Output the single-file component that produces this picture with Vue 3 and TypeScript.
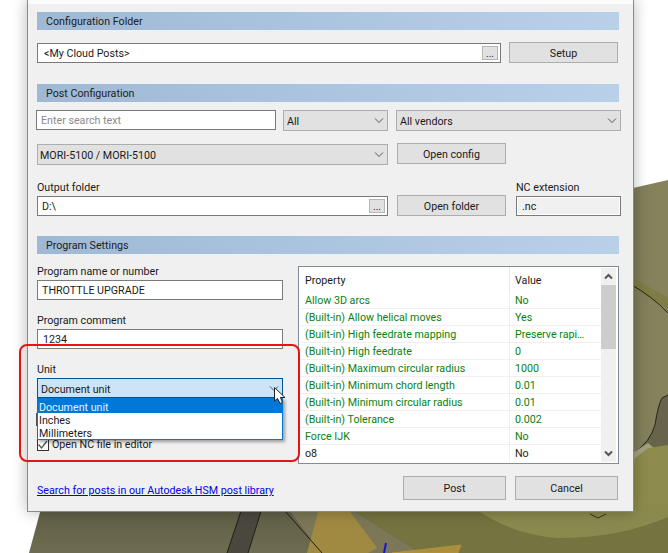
<script setup lang="ts">
interface Row { name: string; value: string; dark?: boolean }
const rows: Row[] = [
  { name: 'Allow 3D arcs', value: 'No' },
  { name: '(Built-in) Allow helical moves', value: 'Yes' },
  { name: '(Built-in) High feedrate mapping', value: 'Preserve rapi…' },
  { name: '(Built-in) High feedrate', value: '0' },
  { name: '(Built-in) Maximum circular radius', value: '1000' },
  { name: '(Built-in) Minimum chord length', value: '0.01' },
  { name: '(Built-in) Minimum circular radius', value: '0.01' },
  { name: '(Built-in) Tolerance', value: '0.002' },
  { name: 'Force IJK', value: 'No' },
  { name: 'o8', value: 'No', dark: true },
]
</script>

<template>
  <div class="desk">
    <svg class="cad" width="668" height="553" viewBox="0 0 668 553">
      <defs>
        <linearGradient id="wall" x1="0" y1="0" x2="1" y2="0">
          <stop offset="0" stop-color="#7f7c5a" />
          <stop offset="1" stop-color="#86835c" />
        </linearGradient>
        <linearGradient id="ground" x1="0" y1="0" x2="0" y2="1">
          <stop offset="0" stop-color="#5f5e46" />
          <stop offset="1" stop-color="#6d6c50" />
        </linearGradient>
      </defs>
      <polygon points="620,191 668,180 668,520 620,520" fill="url(#wall)" />
      <polygon points="620,270 668,298 668,309 620,281" fill="#7f7c45" />
      <path d="M630 284 Q652 296 668 313" fill="none" stroke="#26251a" />
      <path d="M620 462 L634 453 Q650 442 655 425 Q658 405 662 398 L668 395 L668 450 L620 480Z" fill="#66644a" />
      <path d="M634 453 Q650 442 655 425 Q658 405 662 398 L668 395" fill="none" stroke="#26251a" />
      <polygon points="634,452 648,443 655,449 634,470" fill="#a3a384" />
      <polygon points="620,520 620,470 648,448 668,445 668,553 620,553" fill="#8e8c4c" />
      <polygon points="42,505 29,553 668,553 668,505" fill="url(#ground)" />
      <polygon points="285,505 345,505 420,553 322,553" fill="#7c7857" />
      <polygon points="345,505 668,505 668,553 420,553" fill="#75733f" />
      <path d="M470 505 Q510 535 558 538 Q620 538 668 517 L668 505Z" fill="#8b8a4e" />
      <path d="M590 514 L598 518 L606 514" fill="none" stroke="#35341f" />
      <polygon points="243,505 263,505 248,553 227,553" fill="#4a483e" />
      <path d="M243 505 L227 553 M263 505 L248 553" stroke="#1f1e18" fill="none" />
      <polygon points="320,505 345,505 377,548 368,553 307,553" fill="#a08a42" />
      <polygon points="392,553 461,545 458,553" fill="#a88e3e" stroke="#c49b37" stroke-width=".6" />
      <path d="M285 511 L322 553" stroke="#1f1e18" fill="none" />
      <path d="M386 543 L384 553" stroke="#1414e0" stroke-width="2" fill="none" />
    </svg>
    <div class="dialog">
      <div class="head first">Configuration Folder</div>
      <div class="row folder-row">
        <div class="input folder">&lt;My Cloud Posts&gt;<span class="dots">...</span></div>
        <button class="btn setup">Setup</button>
      </div>
      <div class="head second">Post Configuration</div>
      <div class="row filter-row">
        <div class="input search">Enter search text</div>
        <div class="combo all"><span>All</span><svg class="chev" width="10" height="6" viewBox="0 0 10 6"><path d="M1 .5 5 4.500 9 .5" fill="none" stroke="#555" /></svg></div>
        <div class="combo vendors"><span>All vendors</span><svg class="chev" width="10" height="6" viewBox="0 0 10 6"><path d="M1 .5 5 4.500 9 .5" fill="none" stroke="#555" /></svg></div>
      </div>
      <div class="row machine-row">
        <div class="combo machine"><span>MORI-5100 / MORI-5100</span><svg class="chev" width="10" height="6" viewBox="0 0 10 6"><path d="M1 .5 5 4.500 9 .5" fill="none" stroke="#555" /></svg></div>
        <button class="btn open">Open config</button>
      </div>
      <div class="row output-row">
        <div class="field out">
          <label>Output folder</label>
          <div class="input outval">D:\<span class="dots">...</span></div>
        </div>
        <button class="btn open">Open folder</button>
        <div class="field ext">
          <label>NC extension</label>
          <div class="input readonly">.nc</div>
        </div>
      </div>
      <div class="head third">Program Settings</div>
      <div class="settings">
        <div class="left">
          <label>Program name or number</label>
          <div class="input">THROTTLE UPGRADE</div>
          <label class="l2">Program comment</label>
          <div class="input comment">1234</div>
          <label class="l3">Unit</label>
          <div class="unit">
            <span>Document unit</span>
            <svg class="chev" width="10" height="6" viewBox="0 0 10 6"><path d="M1 .5 5 4.500 9 .5" fill="none" stroke="#555" /></svg>
          </div>
          <div class="hidden-edge"></div>
          <div class="check-line">
            <span class="box"><svg width="12" height="12" viewBox="0 0 12 12"><path d="M1.500 5.500 4.500 9 10 2" fill="none" stroke="#555" stroke-width="1.3" /></svg></span>
            <span class="check-text">Open NC file in editor</span>
          </div>
          <div class="menu">
            <div class="opt on">Document unit</div>
            <div class="opt">Inches</div>
            <div class="opt">Millimeters</div>
          </div>
          <svg class="cursor" width="14" height="19" viewBox="0 0 14 19"><path d="M1.500 1.500V15L4.500 12.500 7 17.500 9.500 16.500 7.500 11.500H12Z" fill="#fff" stroke="#222" /></svg>
        </div>
        <div class="table">
          <div class="grid-wrap">
            <div class="thead"><span class="c1">Property</span><span class="c2">Value</span></div>
            <div v-for="r in rows" :key="r.name" class="tr" :class="{ dark: r.dark }">
              <span class="c1">{{ r.name }}</span><span class="c2">{{ r.value }}</span>
            </div>
          </div>
          <div class="scroll">
            <svg width="15" height="17" viewBox="0 0 15 17"><path d="M4 10.500 7.500 7 11 10.500" fill="none" stroke="#555" stroke-width="2" /></svg>
            <div class="thumb"></div>
            <svg class="down" width="15" height="17" viewBox="0 0 15 17"><path d="M4 6.500 7.500 10 11 6.500" fill="none" stroke="#555" stroke-width="2" /></svg>
          </div>
        </div>
      </div>
      <div class="foot">
        <a class="link">Search for posts in our Autodesk HSM post library</a>
        <button class="btn big">Post</button>
        <button class="btn big">Cancel</button>
      </div>
      <div class="redbox"></div>
    </div>
  </div>
</template>

<style>
html, body { margin: 0; padding: 0; background: #fff; }
</style>

<style scoped>
.desk {
  position: relative;
  width: 668px;
  height: 553px;
  overflow: hidden;
  background: #fff;
  font-family: Roboto, "Noto Sans", sans-serif;
  font-size: 10.7px;
  color: #1a1a1a;
}
.cad { position: absolute; left: 0; top: 0; }
.dialog {
  position: absolute;
  left: 27px;
  top: -1px;
  width: 607px;
  height: 513px;
  box-sizing: border-box;
  border: 1px solid #7f8d9b;
  border-top: 0;
  background: #f0f0f0;
  padding: 13px 0 0 9px;
  box-shadow: 0 0 14px rgba(0, 0, 0, .28);
}
.dialog::before {
  content: "";
  position: absolute;
  left: 0; right: 0; top: 0; height: 5px;
  background: #fbfbfb;
}
.head {
  position: relative;
  height: 18px;
  line-height: 19px;
  padding-left: 9px;
  width: 582px;
  box-sizing: border-box;
  background: linear-gradient(90deg, #9fb9d5, #b9d0e9);
  color: #1c1c1c;
}
.row { display: flex; }
.input {
  position: relative;
  box-sizing: border-box;
  height: 20px;
  line-height: 19px;
  border: 1px solid #7a7a7a;
  background: #fff;
  padding-left: 4px;
}
.dots {
  position: absolute;
  right: 2px;
  top: 2px;
  box-sizing: border-box;
  width: 16px;
  height: 14px;
  background: #e1e1e1;
  border: 1px solid #b5b5b5;
  line-height: 13px;
  text-align: center;
  font-size: 10px;
}
.btn {
  box-sizing: border-box;
  font: inherit;
  color: #1a1a1a;
  background: #e1e1e1;
  border: 1px solid #adadad;
  padding: 1px 0 0;
}
.folder-row { margin-top: 13px; }
.folder { width: 464px; padding-left: 6px; line-height: 20px; }
.setup { width: 109px; height: 21px; margin-left: 8px; margin-top: -1px; }
.second { margin-top: 21px; }
.filter-row { margin-top: 8px; margin-left: -1px; }
.search { width: 240px; color: #8a8a8a; }
.combo {
  box-sizing: border-box;
  display: flex;
  align-items: center;
  justify-content: space-between;
  height: 21px;
  background: #e1e1e1;
  border: 1px solid #adadad;
  padding: 1px 3px 0 3px;
}
.chev { flex: none; }
.all { width: 105px; margin-left: 7px; }
.vendors { width: 225px; margin-left: 8px; }
.machine-row { margin-top: 13px; }
.machine { width: 351px; padding-left: 2px; }
.open { width: 109px; height: 21px; margin-left: 9px; margin-top: -1px; }
.output-row { margin-top: 14px; align-items: flex-end; }
.field label { display: block; height: 17px; line-height: 17px; }
.out { width: 351px; }
.ext { width: 105px; margin-left: 10px; }
.readonly { background: #f0f0f0; box-shadow: inset 0 0 0 1px #fff; padding-left: 5px; }
.output-row .open { margin-top: 0; }
.third { margin-top: 20px; }
.settings { display: flex; margin-top: 12px; }
.left { position: relative; width: 261px; }
.left label { display: block; height: 14px; line-height: 12px; }
.left .input { width: 246px; }
.left .comment { padding-left: 5px; }
.left .l2 { margin-top: 15px; }
.left .l3 { margin-top: 15px; }
.unit {
  box-sizing: border-box;
  width: 246px;
  height: 20px;
  display: flex;
  align-items: center;
  justify-content: space-between;
  background: #cce4f7;
  border: 1px solid #005499;
  padding: 2px 3px 0 3px;
}
.hidden-edge {
  width: 1px;
  height: 13px;
  margin: 15px 0 13px -1px;
  background: #555;
}
.check-line {
  display: flex;
  align-items: center;
  gap: 3px;
  height: 12px;
}
.check-text { line-height: 10px; }
.box {
  display: block;
  box-sizing: border-box;
  width: 12px;
  height: 12px;
  border: 1px solid #333;
  background: #fff;
}
.box svg { display: block; margin: -1px; }
.menu {
  position: absolute;
  left: 0;
  top: 132px;
  width: 246px;
  box-sizing: border-box;
  background: #fff;
  border: 1px solid #0078d7;
  border-top: 0;
  box-shadow: 2px 2px 3px rgba(0, 0, 0, .35);
  line-height: 15px;
}
.opt { height: 13px; padding-left: 1px; }
.on { background: #0078d7; color: #e6f1fb; height: 15px; line-height: 19px; }
.cursor { position: absolute; left: 236px; top: 120px; }
.redbox {
  position: absolute;
  left: -9px;
  top: 345px;
  width: 277px;
  height: 114px;
  border: 2px solid #ee1111;
  border-radius: 8px;
}
.table {
  box-sizing: border-box;
  width: 321px;
  height: 198px;
  display: flex;
  background: #fff;
  border: 1px solid #7f8d9b;
}
.grid-wrap { width: 302px; padding-left: 1px; box-sizing: border-box; }
.thead { display: flex; height: 25px; line-height: 27px; }
.thead .c1 { border-right: 1px solid #e8e8e8; }
.tr {
  display: flex;
  height: 17px;
  line-height: 18px;
  color: #0a7f12;
  box-sizing: border-box;
  border-bottom: 1px solid #f0f0f0;
}
.tr.dark { color: #222; border-bottom: 0; }
.c1 { display: block; box-sizing: border-box; width: 210px; padding-left: 5px; border-right: 1px solid #f0f0f0; white-space: nowrap; }
.c2 { display: block; padding-left: 5px; white-space: nowrap; }
.scroll {
  position: relative;
  width: 15px;
  margin: 1px 2px 1px 0;
  background: #f0f0f0;
}
.scroll svg { display: block; }
.thumb { height: 64px; background: #cdcdcd; }
.down { position: absolute; bottom: 0; left: 0; }
.foot { position: relative; display: flex; padding-top: 12px; }
.link {
  position: absolute;
  left: 0;
  top: 19px;
  line-height: 16px;
  color: #0000e8;
  text-decoration: underline;
}
.big { width: 103px; height: 24px; margin-left: 9px; padding-top: 0; }
.big:first-of-type { margin-left: 366px; }
</style>
